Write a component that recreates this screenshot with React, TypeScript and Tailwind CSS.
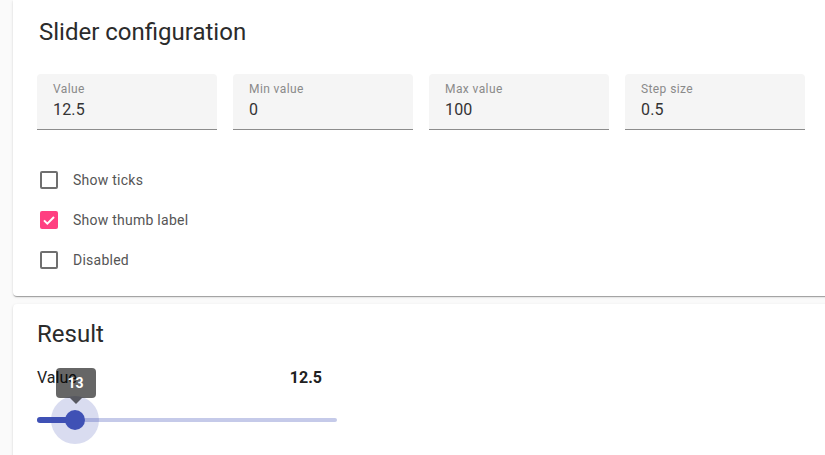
import { useState } from "react";

type Field = { label: string; value: string };

const fields: Field[] = [
    { label: "Value", value: "12.5" },
    { label: "Min value", value: "0" },
    { label: "Max value", value: "100" },
    { label: "Step size", value: "0.5" },
];

function Checkbox({ label, checked, onToggle }: { label: string; checked: boolean; onToggle: () => void }) {
    return (
        <button onClick={onToggle} className="flex h-10 items-center text-left">
            {checked ? (
                <span className="ml-[3px] flex h-[18px] w-[18px] items-center justify-center rounded-[2px] bg-[#ff4081]">
                    <svg viewBox="0 0 24 24" className="h-[16px] w-[16px]" fill="none" stroke="white" strokeWidth="3">
                        <path d="M4.5 12.5l5 5 10-10" />
                    </svg>
                </span>
            ) : (
                <span className="ml-[3px] h-[18px] w-[18px] rounded-[2px] border-2 border-[#6f6f6f]"></span>
            )}
            <span className="ml-[15px] text-[14px] tracking-[0.25px] text-[#555555]">{label}</span>
        </button>
    );
}

export default function App() {
    const [ticks, setTicks] = useState(false);
    const [thumbLabel, setThumbLabel] = useState(true);
    const [disabled, setDisabled] = useState(false);
    const value = 12.5;
    const pct = value; // min 0, max 100

    return (
        <div className="min-h-screen w-full overflow-hidden bg-[#fafafa] pl-[13px] font-['Roboto',sans-serif]">
            {/* Configuration card */}
            <div className="w-[900px] rounded-b-[4px] bg-white px-6 pt-4 pb-4 shadow-[0_2px_1px_-1px_rgba(0,0,0,0.2),0_1px_1px_0_rgba(0,0,0,0.14),0_1px_3px_0_rgba(0,0,0,0.12)]">
                <h2 className="ml-[2px] text-[24px] leading-8 text-[#2b2b2b]">Slider configuration</h2>

                <div className="mt-[26px] flex gap-4">
                    {fields.map((f) => (
                        <div
                            key={f.label}
                            className="h-[56px] w-[180px] rounded-t-[4px] border-b border-[#8c8c8c] bg-[#f5f5f5] px-4 pt-[7px]"
                        >
                            <div className="text-[12px] leading-4 tracking-[0.4px] text-[#8a8a8a]">{f.label}</div>
                            <div className="mt-px text-[16px] leading-6 tracking-[0.15px] text-[#333333]">{f.value}</div>
                        </div>
                    ))}
                </div>

                <div className="mt-[30px] flex flex-col items-start">
                    <Checkbox label="Show ticks" checked={ticks} onToggle={() => setTicks(!ticks)} />
                    <Checkbox label="Show thumb label" checked={thumbLabel} onToggle={() => setThumbLabel(!thumbLabel)} />
                    <Checkbox label="Disabled" checked={disabled} onToggle={() => setDisabled(!disabled)} />
                </div>
            </div>

            {/* Result card */}
            <div className="mt-2 h-[200px] w-[900px] rounded-t-[4px] bg-white px-6 pt-[14px] shadow-[0_2px_1px_-1px_rgba(0,0,0,0.2),0_1px_1px_0_rgba(0,0,0,0.14),0_1px_3px_0_rgba(0,0,0,0.12)]">
                <h2 className="text-[24px] leading-8 text-[#2b2b2b]">Result</h2>

                <div className="mt-4 flex w-[285px] items-center justify-between text-[16px] leading-6 text-[#212121]">
                    <span>Value</span>
                    <span className="font-bold">{value}</span>
                </div>

                <div className="relative mt-[6px] h-12 w-[300px]">
                    <div className="absolute top-[22px] left-0 h-1 w-full rounded-full bg-[#c5cae9]"></div>
                    <div
                        className="absolute top-[21px] left-0 h-[6px] rounded-full bg-[#3f51b5]"
                        style={{ width: `${pct}%` }}
                    ></div>
                    <div className="absolute top-0 h-12" style={{ left: `${pct}%` }}>
                        <div className="absolute top-0 -left-6 h-12 w-12 rounded-full bg-[#3f51b5]/20"></div>
                        <div className="absolute top-[14px] -left-[10px] h-5 w-5 rounded-full bg-[#3f51b5]"></div>
                        {thumbLabel && (
                            <div className="absolute -top-7 -left-[19px] flex flex-col items-center">
                                <div className="flex h-[30px] w-10 items-center justify-center rounded-[4px] bg-black/60 text-[14px] font-bold text-white">
                                    13
                                </div>
                                <div className="h-0 w-0 border-x-[6px] border-t-[6px] border-x-transparent border-t-black/60"></div>
                            </div>
                        )}
                    </div>
                </div>
            </div>
        </div>
    );
}
